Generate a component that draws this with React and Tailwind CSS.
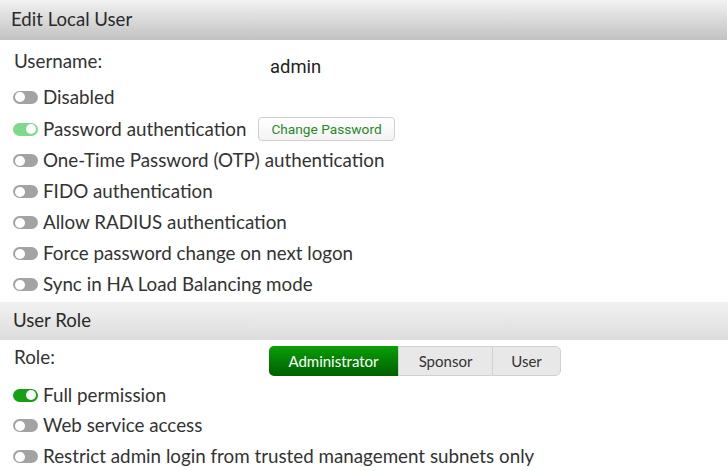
import { useState } from 'react'

function Toggle({ on, dim }) {
  const bg = on ? (dim ? 'bg-[#7fd88c]' : 'bg-[#16a016]') : 'bg-[#a3a3a3]'
  return (
    <span className={`relative inline-block w-[25px] h-[13px] rounded-full shrink-0 ${bg}`}>
      <span
        className={`absolute top-[1.5px] w-[10px] h-[10px] rounded-full bg-white ${on ? 'right-[2px]' : 'left-[2px]'}`}
      />
    </span>
  )
}

function Row({ on, dim, label, h = 'h-[31px]', children }) {
  return (
    <div className={`flex items-center ${h} pl-[13px]`}>
      <Toggle on={on} dim={dim} />
      <span className="ml-[5px] text-[18.8px] text-[#333]">{label}</span>
      {children}
    </div>
  )
}

export default function App() {
  const [role, setRole] = useState('Administrator')
  const roles = [
    { name: 'Administrator', w: 'w-[129px]' },
    { name: 'Sponsor', w: 'w-[94px]' },
    { name: 'User', w: 'w-[69px]' },
  ]

  return (
    <div className="w-[728px] h-[471px] bg-white overflow-hidden" style={{ fontFamily: 'Lato, "Open Sans", sans-serif' }}>
      <div className="h-[40px] w-[727px] flex items-center pl-[11px] bg-gradient-to-b from-[#f2f2f2] to-[#c2c2c2]">
        <span className="text-[18.6px] text-[#2a2a2a]">Edit Local User</span>
      </div>

      <div className="h-[41px] flex pl-[14px]">
        <span className="w-[256px] pt-[7px] text-[18.8px] text-[#333]">Username:</span>
        <span className="pt-[13px] text-[18.4px] text-[#222]" style={{ fontFamily: 'Roboto, sans-serif' }}>admin</span>
      </div>

      <Row label="Disabled" h="h-[32px]" />
      <Row on dim label="Password authentication" h="h-[32px]">
        <button
          className="ml-[12px] h-[24px] px-[12px] rounded-[4px] border border-[#cfcfcf] bg-gradient-to-b from-white to-[#f3f3f3] text-[13.7px] text-[#1f8a1f]"
          style={{ fontFamily: 'Roboto, sans-serif' }}
        >
          Change Password
        </button>
      </Row>
      <Row label="One-Time Password (OTP) authentication" />
      <Row label="FIDO authentication" />
      <Row label="Allow RADIUS authentication" />
      <Row label="Force password change on next logon" />
      <Row label="Sync in HA Load Balancing mode" />

      <div className="mt-[2px] h-[38px] flex items-center pl-[13px] bg-gradient-to-b from-[#f1f1f1] to-[#dddddd]">
        <span className="text-[18.6px] text-[#2a2a2a]">User Role</span>
      </div>

      <div className="h-[40px] flex pl-[14px]">
        <span className="w-[255px] pt-[3px] text-[18.8px] text-[#333]">Role:</span>
        <div className="mt-[6px] flex h-[30px] rounded-[5px] overflow-hidden">
          {roles.map((r, i) => (
            <button
              key={r.name}
              onClick={() => setRole(r.name)}
              className={`${r.w} h-full flex items-center justify-center text-[15px] ${
                role === r.name
                  ? 'bg-gradient-to-b from-[#0aa00a] to-[#005f00] text-white'
                  : 'bg-[#e8e8e8] text-[#333] border-y border-[#d0d0d0]'
              } ${i > 0 ? 'border-l border-l-[#d0d0d0]' : ''} ${i === roles.length - 1 ? 'border-r border-r-[#d0d0d0] rounded-r-[5px]' : ''}`}
            >
              {r.name}
            </button>
          ))}
        </div>
      </div>

      <Row on label="Full permission" h="h-[30px]" />
      <Row label="Web service access" />
      <Row label="Restrict admin login from trusted management subnets only" />
    </div>
  )
}
